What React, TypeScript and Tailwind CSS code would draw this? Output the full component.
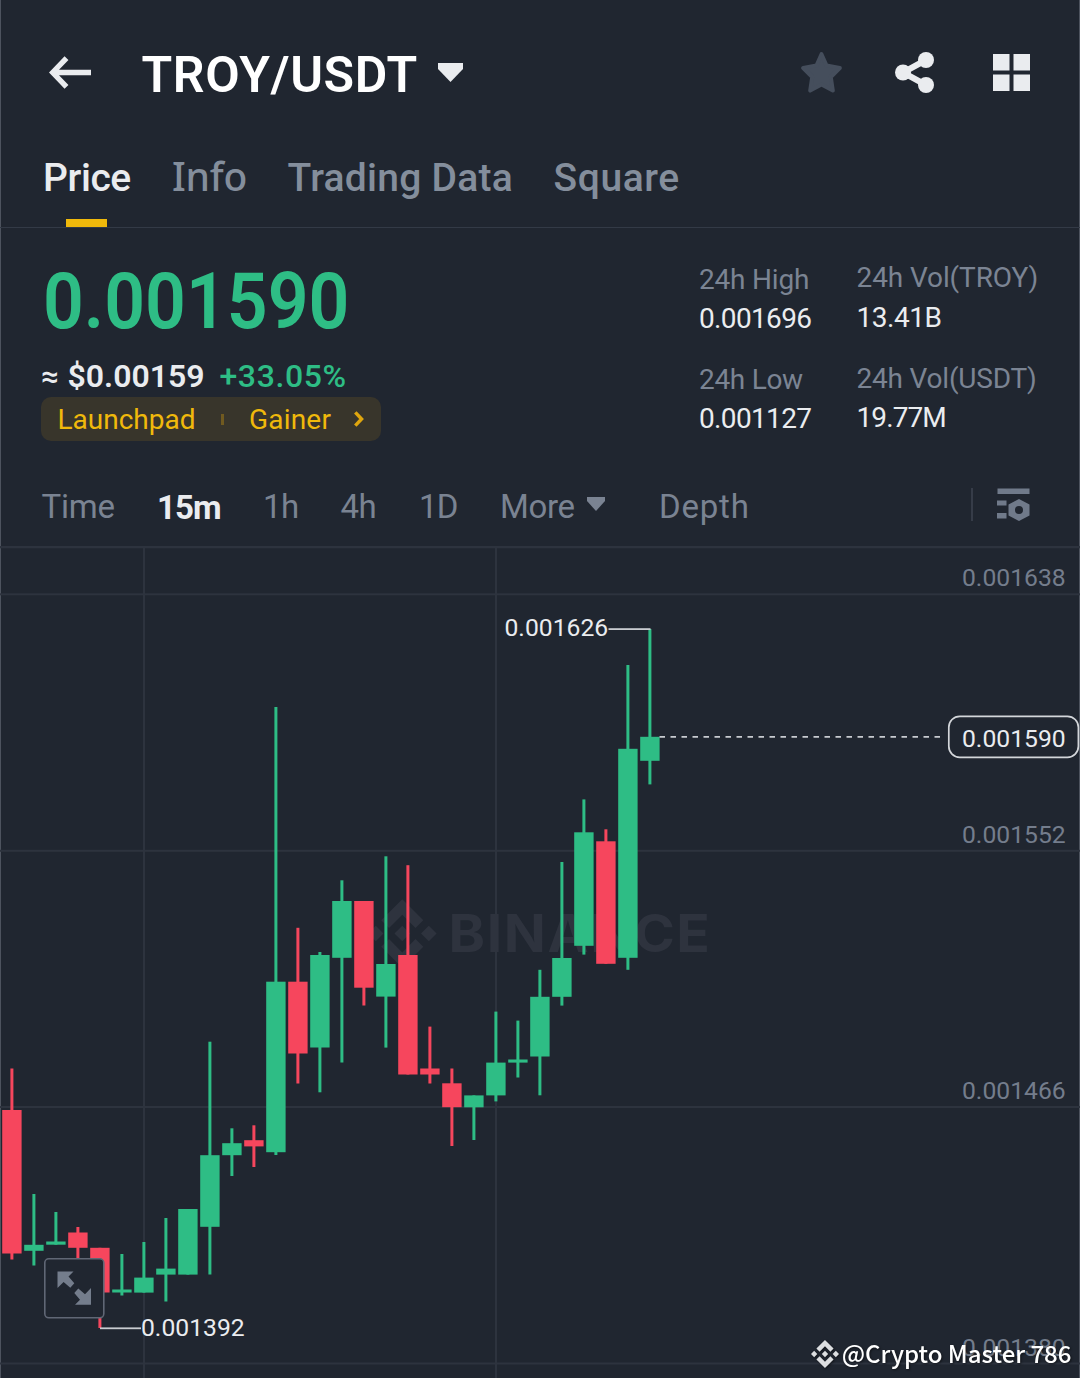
import React from "react";
import clsx from "clsx";

type Candle = {
  high: number;
  top: number;
  bottom: number;
  low: number;
  down?: boolean;
};

const CANDLES: Candle[] = [
  { high: 1068.5, top: 1110, bottom: 1253.5, low: 1259.5, down: true },
  { high: 1194, top: 1244.8, bottom: 1250.8, low: 1265.5 },
  { high: 1212, top: 1241.5, bottom: 1244.7, low: 1244.7 },
  { high: 1227, top: 1232.5, bottom: 1247.8, low: 1265, down: true },
  { high: 1247.8, top: 1247.8, bottom: 1292.5, low: 1328, down: true },
  { high: 1254, top: 1289.5, bottom: 1292.5, low: 1295.5 },
  { high: 1242, top: 1277.6, bottom: 1292.6, low: 1292.6 },
  { high: 1218, top: 1268.6, bottom: 1274.6, low: 1301.5 },
  { high: 1209, top: 1209, bottom: 1274.6, low: 1274.6 },
  { high: 1041.7, top: 1155.2, bottom: 1226.8, low: 1274.5 },
  { high: 1128.3, top: 1143.2, bottom: 1155.2, low: 1176 },
  { high: 1125.3, top: 1140.2, bottom: 1146.4, low: 1167, down: true },
  { high: 707, top: 981.7, bottom: 1152.2, low: 1155 },
  { high: 927.8, top: 981.7, bottom: 1053.5, low: 1083.5, down: true },
  { high: 952, top: 955, bottom: 1047.5, low: 1092.3 },
  { high: 880.3, top: 901, bottom: 957.8, low: 1062.5 },
  { high: 901, top: 901, bottom: 987.7, low: 1005.5, down: true },
  { high: 856.3, top: 964, bottom: 996.6, low: 1047.6 },
  { high: 865.2, top: 955, bottom: 1074.5, low: 1074.5, down: true },
  { high: 1026.6, top: 1068.5, bottom: 1074.5, low: 1083.5, down: true },
  { high: 1068.5, top: 1083.3, bottom: 1107.2, low: 1146, down: true },
  { high: 1095.4, top: 1095.4, bottom: 1107.3, low: 1140 },
  { high: 1011.6, top: 1062.6, bottom: 1095.4, low: 1101.4 },
  { high: 1020.6, top: 1059.5, bottom: 1062.6, low: 1077.5 },
  { high: 969.8, top: 996.8, bottom: 1056.5, low: 1095.3 },
  { high: 862, top: 958, bottom: 996.8, low: 1005.6 },
  { high: 799.4, top: 832.3, bottom: 945.8, low: 954.6 },
  { high: 829.3, top: 841.3, bottom: 963.8, low: 963.8, down: true },
  { high: 665, top: 748.8, bottom: 957.8, low: 969.8 },
  { high: 629, top: 736.8, bottom: 760.8, low: 784.4 },
];

const PRICE_LABELS = [
  { text: "0.001638", y: 585.7 },
  { text: "0.001552", y: 842.7 },
  { text: "0.001466", y: 1098.7 },
  { text: "0.001380", y: 1355.5 },
];

const BINANCE_LOGO =
  "M16.624 13.9202l2.7175 2.7154-7.353 7.353-7.353-7.352 2.7175-2.7164 4.6355 4.6595 4.6356-4.6595zm4.6366-4.6366L24 12l-2.7154 2.7164L18.5682 12l2.6924-2.7164zm-9.272.001l2.7163 2.6914-2.7164 2.7174v-.001L9.2721 12l2.7164-2.7154zm-9.2722-.001L5.4088 12l-2.6914 2.6924L0 12l2.7164-2.7164zM11.9885.0115l7.353 7.329-2.7174 2.7154-4.6356-4.6356-4.6355 4.6595-2.7174-2.7154 7.353-7.353z";

const Header = () => {
  return (
    <header className="flex h-[145px] items-center pr-[50px] pl-[49px]">
      <svg width="42" height="34" viewBox="0 0 42 34" className="shrink-0" fill="none" stroke="#eaecef" strokeWidth="5.4">
        <path d="M17.5 2.2L3.7 16.5L17.5 30.8M3.7 16.5H42" />
      </svg>
      <h1 className="ml-[50.5px] w-[296px] pt-[5px] text-[50px] leading-[60px] font-semibold tracking-[0.6px] whitespace-nowrap text-white">
        TROY/USDT
      </h1>
      <svg width="25" height="19" viewBox="0 0 25 19" className="shrink-0 fill-[#eaecef]">
        <path d="M0 0H25V6L12.5 19L0 6Z" />
      </svg>
      <div className="ml-auto flex items-center">
        <svg width="41" height="41" viewBox="0 0 41 41" fill="#454e5c" stroke="#454e5c" strokeWidth="4" strokeLinejoin="round">
          <path d="M20.5 2.2L25.4 13.4L38.8 16L29.8 25L31.8 38.6L20.5 32.6L9.2 38.6L11.2 25L2.2 16L15.6 13.4Z" />
        </svg>
        <svg width="40" height="41" viewBox="0 0 40 41" className="ml-[53px] fill-[#eaecef]">
          <path d="M31 8L8 20.5L31 33" fill="none" stroke="#eaecef" strokeWidth="6" />
          <circle cx="8" cy="20.5" r="8" />
          <circle cx="31" cy="8" r="8" />
          <circle cx="31" cy="33" r="8" />
        </svg>
        <svg width="37" height="37" viewBox="0 0 37 37" className="ml-[58px] fill-[#eaecef]">
          <path d="M0 0H16.5V16.5H0ZM20.5 0H37V16.5H20.5ZM0 20.5H16.5V37H0ZM20.5 20.5H37V37H20.5Z" />
        </svg>
      </div>
    </header>
  );
};

const Tabs = () => {
  return (
    <nav className="flex h-[83px] border-b border-[#333a46] pl-[43px] text-[39px] leading-[66px] font-medium whitespace-nowrap text-[#848e9c]">
      <div className="w-[129px] tracking-[-0.4px] text-[#eaecef]">
        Price
        <div className="mt-[7.5px] ml-[23px] h-[8.5px] w-[41px] bg-[#f0b90b]" />
      </div>
      <div className="-mt-[2px] w-[115.5px] font-['Noto_Sans',sans-serif] tracking-[-0.2px]">Info</div>
      <div className="w-[266px] tracking-[0.25px]">Trading Data</div>
      <div className="tracking-[0.6px]">Square</div>
    </nav>
  );
};

const Stat = ({ label, value, className, valueClassName }: { label: string; value: string; className?: string; valueClassName?: string }) => {
  return (
    <div className="text-[28px] leading-[39px] whitespace-nowrap">
      <div className={clsx("text-[#7b8493]", className)}>{label}</div>
      <div className={clsx("text-[#eaecef]", valueClassName)}>{value}</div>
    </div>
  );
};

const Summary = () => {
  return (
    <section className="flex h-[242px] pl-[41px]">
      <div className="w-[658px] pt-8">
        <div className="ml-[2px] h-[84px] w-[340px] origin-left scale-x-[0.917] text-[78px] leading-[84px] font-semibold text-[#2ebd85]">
          0.001590
        </div>
        <div className="mt-[13px] flex h-10 text-[32px] leading-[39px] whitespace-nowrap text-[#eaecef]">
          <span className="w-[26.5px] text-[31px] font-medium">≈</span>
          <span className="w-[152px] font-semibold">$0.00159</span>
          <span className="font-medium tracking-[0.6px] text-[#2ebd85]">+33.05%</span>
        </div>
        <div className="flex h-[44px] w-[340px] items-center rounded-[10px] bg-[#38352b] pl-[16.5px] text-[28px] leading-[42px] text-[#f0b90b]">
          <span className="w-[163.5px] pt-[2px]">Launchpad</span>
          <span className="h-[11px] w-[2.5px] bg-[#705a20]" />
          <span className="ml-[25.5px] w-[104.5px] pt-[2px] tracking-[0.2px]">Gainer</span>
          <svg width="10" height="16" viewBox="0 0 10 16" fill="none" stroke="#dfa60e" strokeWidth="3.4">
            <path d="M1.3 1.3L7.6 8L1.3 14.7" />
          </svg>
        </div>
      </div>
      <div className="flex w-[157.5px] flex-col gap-[22px] pt-8">
        <Stat label="24h High" value="0.001696" className="tracking-[-0.2px]" valueClassName="tracking-[-0.65px]" />
        <Stat label="24h Low" value="0.001127" className="tracking-[-0.3px]" valueClassName="tracking-[-0.65px]" />
      </div>
      <div className="flex flex-col gap-[23px] pt-[30px]">
        <Stat label="24h Vol(TROY)" value="13.41B" className="tracking-[-0.1px]" valueClassName="tracking-[-0.45px] pt-px -mb-px" />
        <Stat label="24h Vol(USDT)" value="19.77M" className="tracking-[-0.2px]" valueClassName="tracking-[-0.9px]" />
      </div>
    </section>
  );
};

const Intervals = () => {
  return (
    <div className="flex h-[76px] items-start pl-[41.5px] text-[33px] leading-[74px] whitespace-nowrap text-[#7a8392]">
      <span className="w-[115.5px] tracking-[-0.2px]">Time</span>
      <span className="w-[106px] pt-px font-bold tracking-[-0.9px] text-[#eaecef]">15m</span>
      <span className="w-[77.5px] tracking-[-0.6px]">1h</span>
      <span className="w-[78.5px] tracking-[-0.6px]">4h</span>
      <span className="w-[81px] tracking-[-0.8px]">1D</span>
      <span className="w-[87px] tracking-[-0.3px]">More</span>
      <svg width="18" height="14" viewBox="0 0 18 14" className="mt-[27px] shrink-0 fill-[#7a8392]">
        <path d="M0 0H18V4L9 14L0 4Z" />
      </svg>
      <span className="ml-[54px] tracking-[0.8px]">Depth</span>
      <span className="mt-[18px] ml-auto h-[33px] w-[2px] bg-[#363c48]" />
      <svg width="33" height="33" viewBox="0 0 33 33" className="mt-[18px] mr-[50px] ml-[24px] shrink-0 fill-[#707a8a]">
        <path d="M0.5 0.5H32.5V6H0.5ZM0 12.5H9.5V17.5H0ZM0 25H9.5V30.5H0Z" />
        <path
          fillRule="evenodd"
          d="M22 11L32.5 16.5V27.5L22 33L11.5 27.5V16.5ZM22 18A4 4 0 1 0 22 26A4 4 0 1 0 22 18Z"
        />
      </svg>
    </div>
  );
};

const CandleStick = ({ candle, index }: { candle: Candle; index: number }) => {
  const x = 11.9 + index * 22;
  return (
    <g fill={candle.down ? "#f6465d" : "#2ebd85"}>
      <rect x={x - 1.5} y={candle.high} width="3" height={candle.low - candle.high} />
      <rect x={x - 9.7} y={candle.top} width="19.4" height={candle.bottom - candle.top} />
    </g>
  );
};

const Chart = () => {
  return (
    <svg width="1080" height="832" viewBox="0 546 1080 832" className="block font-[Roboto,sans-serif] text-[24.7px]">
      <g fill="#2d333e">
        <rect x="0" y="546" width="1080" height="2.3" />
        <rect x="0" y="593.3" width="1080" height="2" />
        <rect x="0" y="849.8" width="1080" height="2" />
        <rect x="0" y="1106" width="1080" height="2" />
        <rect x="0" y="1362.5" width="1080" height="2" />
        <rect x="143" y="546" width="2" height="832" />
        <rect x="495" y="546" width="2" height="832" />
      </g>

      <g fill="#2e333e">
        <path d={BINANCE_LOGO} transform="translate(368 899.3) scale(2.858)" />
        <text
          x="448.5"
          y="952.3"
          textLength="263"
          lengthAdjust="spacingAndGlyphs"
          className="font-[Inter,sans-serif] text-[51.8px] font-bold tracking-[1.5px]"
        >
          BINANCE
        </text>
      </g>

      {CANDLES.map((candle, index) => (
        <CandleStick key={index} candle={candle} index={index} />
      ))}

      <g fill="#747d8c">
        {PRICE_LABELS.map((label) => (
          <text key={label.text} x="962" y={label.y}>
            {label.text}
          </text>
        ))}
      </g>

      {/* high / low callouts */}
      <g fill="#eaecef" stroke="none">
        <rect x="608.5" y="628.2" width="42" height="1.8" fill="#c8cbd0" />
        <text x="504.5" y="635.7">0.001626</text>
        <rect x="100" y="1327.4" width="41" height="1.8" fill="#c8cbd0" />
        <text x="141" y="1335.6">0.001392</text>
      </g>

      {/* last price */}
      <path d="M659.5 736.8H941" stroke="#c8cbd0" strokeWidth="1.8" strokeDasharray="5.5 5.5" />
      <rect x="948.8" y="716.3" width="129.6" height="41" rx="11" fill="#202630" stroke="#d3d6da" strokeWidth="1.7" />
      <text x="962" y="746.7" fill="#eaecef">
        0.001590
      </text>

      {/* fullscreen toggle */}
      <rect x="44.8" y="1258.8" width="59" height="59" rx="4" fill="#202630" stroke="#606775" strokeWidth="1.6" />
      <path
        fill="#747d8c"
        d="M57.5 1271.5H73.5L68.5 1276.5L74.3 1283.2L70.3 1287.8L63.6 1282L57.5 1288ZM91 1304.7H75L80 1299.7L74.3 1293L78.3 1288.5L85 1294.3L91 1288Z"
      />
    </svg>
  );
};

const Signature = () => {
  return (
    <div className="absolute right-[8.5px] bottom-[7px] flex items-center text-[24px] leading-[36px] font-medium whitespace-nowrap text-white drop-shadow-[1px_1px_1px_rgba(0,0,0,0.5)]">
      <svg width="28" height="28" viewBox="0 0 24 24" className="mt-px mr-[3px] fill-[#dcdee0]">
        <path d={BINANCE_LOGO} />
      </svg>
      <span className="font-['Noto_Sans_CJK_SC',sans-serif]">@Crypto Master 786</span>
    </div>
  );
};

export default function App() {
  return (
    <main className="relative h-[1378px] w-[1080px] overflow-hidden bg-[#202630] font-[Roboto,sans-serif] shadow-[inset_1px_0_0_#4d535e,inset_-1px_0_0_#4d535e]">
      <Header />
      <Tabs />
      <Summary />
      <Intervals />
      <Chart />
      <Signature />
    </main>
  );
}
